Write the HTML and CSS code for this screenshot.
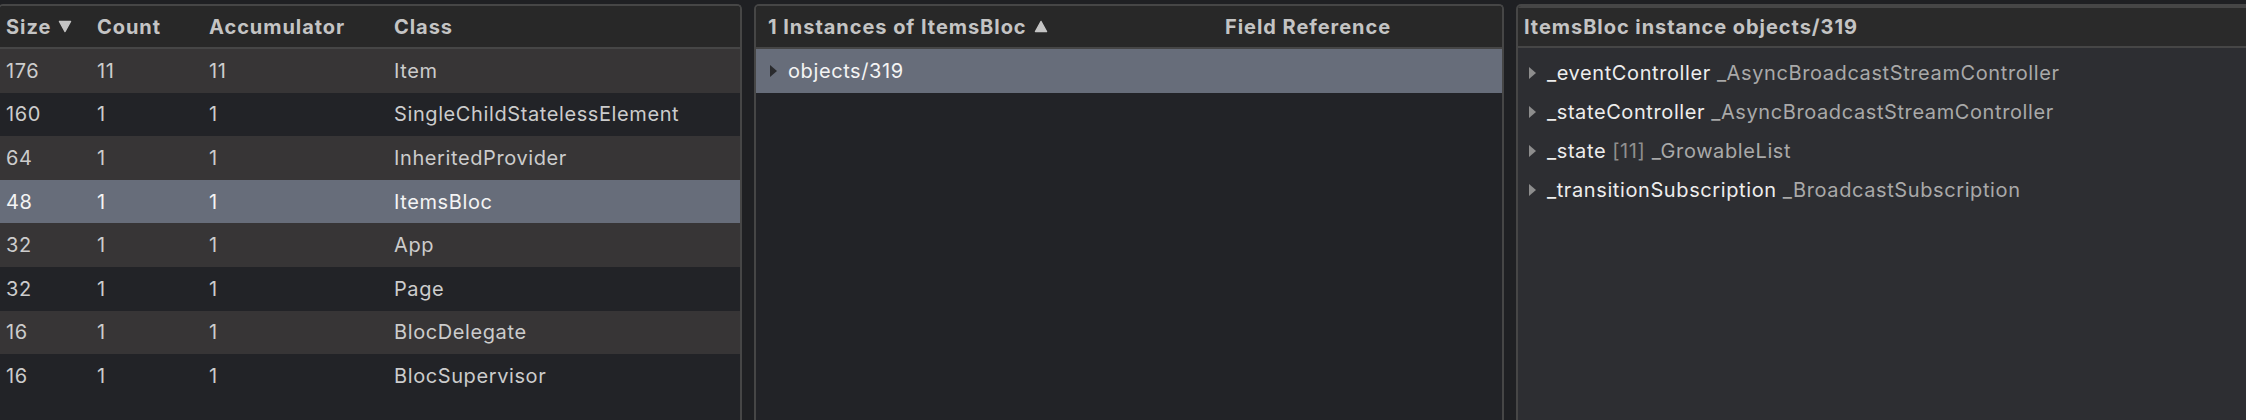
FILE: index.html
```html
<!DOCTYPE html>
<html lang="en">
<head>
<meta charset="utf-8">
<title>Memory – ItemsBloc</title>
<link rel="stylesheet" href="styles.css">
</head>
<body>
<div class="workspace">
  <section class="panel panel-classes">
    <div class="table-head class-cols">
      <div class="cell">Size <svg class="sort-icon" width="14" height="13" viewBox="0 0 14 13"><path d="M1.5 1.5 H12.5 L7 11.5 Z"/></svg></div>
      <div class="cell">Count</div>
      <div class="cell">Accumulator</div>
      <div class="cell">Class</div>
    </div>
    <div class="rows">
      <div class="row class-cols alt"><div class="cell">176</div><div class="cell">11</div><div class="cell">11</div><div class="cell">Item</div></div>
      <div class="row class-cols"><div class="cell">160</div><div class="cell">1</div><div class="cell">1</div><div class="cell">SingleChildStatelessElement</div></div>
      <div class="row class-cols alt"><div class="cell">64</div><div class="cell">1</div><div class="cell">1</div><div class="cell">InheritedProvider</div></div>
      <div class="row class-cols selected"><div class="cell">48</div><div class="cell">1</div><div class="cell">1</div><div class="cell">ItemsBloc</div></div>
      <div class="row class-cols alt"><div class="cell">32</div><div class="cell">1</div><div class="cell">1</div><div class="cell">App</div></div>
      <div class="row class-cols"><div class="cell">32</div><div class="cell">1</div><div class="cell">1</div><div class="cell">Page</div></div>
      <div class="row class-cols alt"><div class="cell">16</div><div class="cell">1</div><div class="cell">1</div><div class="cell">BlocDelegate</div></div>
      <div class="row class-cols"><div class="cell">16</div><div class="cell">1</div><div class="cell">1</div><div class="cell">BlocSupervisor</div></div>
    </div>
  </section>

  <section class="panel panel-instances">
    <div class="table-head instance-cols">
      <div class="cell">1 Instances of ItemsBloc <svg class="sort-icon" width="14" height="13" viewBox="0 0 14 13"><path d="M7 1.5 L12.5 11.5 H1.5 Z"/></svg></div>
      <div class="cell">Field Reference</div>
    </div>
    <div class="rows">
      <div class="row tree-row selected">
        <svg class="disclosure" width="7" height="12" viewBox="0 0 7 12"><path d="M0 0 L7 6 L0 12 Z"/></svg>
        <span>objects/319</span>
      </div>
    </div>
  </section>

  <section class="panel panel-inspector">
    <div class="inspector-head">ItemsBloc instance objects/319</div>
    <div class="tree">
      <div class="tree-row field">
        <svg class="disclosure" width="7" height="12" viewBox="0 0 7 12"><path d="M0 0 L7 6 L0 12 Z"/></svg>
        <span class="field-name">_eventController</span>
        <span class="field-type">_AsyncBroadcastStreamController</span>
      </div>
      <div class="tree-row field">
        <svg class="disclosure" width="7" height="12" viewBox="0 0 7 12"><path d="M0 0 L7 6 L0 12 Z"/></svg>
        <span class="field-name">_stateController</span>
        <span class="field-type">_AsyncBroadcastStreamController</span>
      </div>
      <div class="tree-row field">
        <svg class="disclosure" width="7" height="12" viewBox="0 0 7 12"><path d="M0 0 L7 6 L0 12 Z"/></svg>
        <span class="field-name">_state</span>
        <span class="field-type"><span class="field-count">[11]</span> _GrowableList</span>
      </div>
      <div class="tree-row field">
        <svg class="disclosure" width="7" height="12" viewBox="0 0 7 12"><path d="M0 0 L7 6 L0 12 Z"/></svg>
        <span class="field-name">_transitionSubscription</span>
        <span class="field-type">_BroadcastSubscription</span>
      </div>
    </div>
  </section>
</div>
</body>
</html>
```

FILE: styles.css
```css
html, body {
  margin: 0;
  height: 100%;
  overflow: hidden;
  background: #1f2023;
}

body {
  font-family: "Inter", "Roboto", "Noto Sans", sans-serif;
  font-size: 20px;
  letter-spacing: 0.6px;
  color: #cccccc;
}

.workspace {
  display: flex;
  gap: 12px;
  height: 420px;
  box-sizing: border-box;
  padding-top: 4px;
  margin-left: -2px;
  margin-right: -20px;
}

.panel {
  box-sizing: border-box;
  border: 2px solid #464646;
  border-bottom: none;
  border-radius: 5px 5px 0 0;
  background: #222327;
  overflow: hidden;
  display: flex;
  flex-direction: column;
}

.panel-classes { width: 744px; flex: none; }
.panel-instances { width: 750px; flex: none; }
.panel-inspector { flex: 1; background: #2d2e32; }

.table-head {
  height: 41px;
  flex: none;
  background: #282828;
  border-bottom: 2px solid #464646;
  font-weight: 700;
  letter-spacing: 0.95px;
  color: #c4c4c4;
  align-items: center;
}

.class-cols {
  display: grid;
  grid-template-columns: 91px 112px 185px 1fr;
  align-items: center;
}

.instance-cols {
  display: grid;
  grid-template-columns: 457px 1fr;
  align-items: center;
}

.class-cols .cell {
  padding-left: 6px;
  white-space: nowrap;
}

.instance-cols .cell {
  padding-left: 12px;
  white-space: nowrap;
}

.cell {
  display: flex;
  align-items: center;
}

.sort-icon {
  margin-left: 7px;
  fill: #c4c4c4;
  stroke: #c4c4c4;
  stroke-width: 1.5;
  stroke-linejoin: round;
}

.row {
  height: 43.6px;
}

.row.alt { background: #373536; }

.row.selected {
  background: #676d7a;
  color: #f4f4f4;
}

.tree-row {
  display: flex;
  align-items: center;
  white-space: nowrap;
}

.panel-instances .tree-row {
  padding-left: 14px;
}

.disclosure {
  flex: none;
  margin-right: 11px;
  fill: #8d8d8d;
}

.row.selected .disclosure { fill: #2a2b2e; }

.inspector-head {
  height: 38px;
  flex: none;
  display: flex;
  align-items: center;
  padding-left: 6px;
  background: #2a2a2a;
  border-top: 2px solid #464646;
  border-bottom: 2px solid #464646;
  font-weight: 700;
  letter-spacing: 0.95px;
  color: #c4c4c4;
}

.tree {
  padding-top: 5px;
}

.tree .tree-row {
  height: 39px;
  padding-left: 11px;
}

.field-name {
  color: #ededed;
  margin-right: 6px;
}

.field-type { color: #a9a9a9; }
.field-count { color: #8f8f8f; }
```
